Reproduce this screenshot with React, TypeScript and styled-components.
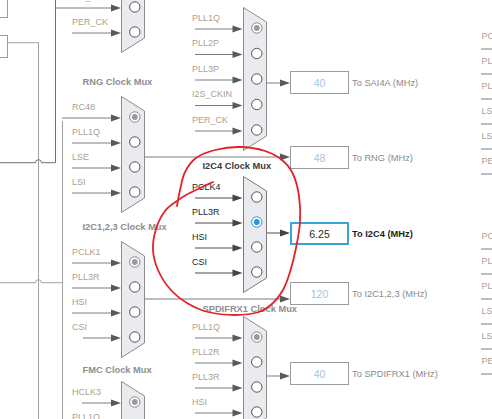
import React from 'react';
import styled, { createGlobalStyle } from 'styled-components';

const GlobalStyle = createGlobalStyle`
  html, body {
    margin: 0;
    padding: 0;
    background: #ffffff;
  }
  body {
    font-family: "Liberation Sans", Arial, sans-serif;
  }
`;

type Pt = [number, number];

interface MuxInput {
  label: string;
  from?: number;
}

interface MuxDef {
  x: number;
  labelX: number;
  wireX: number;
  first: number;
  step: number;
  inputs: MuxInput[];
  sel: number;
  active?: boolean;
  title?: string;
  titleGap?: number;
  outY?: number;
}

interface FreqDef {
  y: number;
  value: string;
  caption: string;
  active?: boolean;
}

const LEFT = 121;
const MID = 242.5;
const MUX_W = 23.5;
const BOX_X = 290;

const muxes: MuxDef[] = [
  {
    x: LEFT, labelX: 72, wireX: 72, first: -18, step: 25, sel: -1,
    inputs: [{ label: 'PLL3P' }, { label: 'I2S_CKIN', from: 55 }, { label: 'PER_CK' }],
  },
  {
    x: LEFT, labelX: 72, wireX: 72, first: 117, step: 25, sel: 0,
    title: 'RNG Clock Mux', titleGap: 8, outY: 157,
    inputs: [{ label: 'RC48', from: 62 }, { label: 'PLL1Q' }, { label: 'LSE' }, { label: 'LSI' }],
  },
  {
    x: LEFT, labelX: 72, wireX: 72, first: 262, step: 25, sel: 0,
    title: 'I2C1,2,3 Clock Mux', titleGap: 8, outY: 299,
    inputs: [{ label: 'PCLK1' }, { label: 'PLL3R' }, { label: 'HSI' }, { label: 'CSI', from: 83 }],
  },
  {
    x: LEFT, labelX: 72, wireX: 82, first: 402, step: 25, sel: 0,
    title: 'FMC Clock Mux', titleGap: 5, 
    inputs: [{ label: 'HCLK3' }, { label: 'PLL1Q' }, { label: 'PLL2R' }],
  },
  {
    x: MID, labelX: 192, wireX: 195, first: 28, step: 25.5, sel: 0, outY: 83,
    inputs: [{ label: 'PLL1Q' }, { label: 'PLL2P' }, { label: 'PLL3P' }, { label: 'I2S_CKIN' }, { label: 'PER_CK' }],
  },
  {
    x: MID, labelX: 192, wireX: 195, first: 197, step: 25, sel: 1, active: true,
    title: 'I2C4 Clock Mux', titleGap: 4, outY: 233,
    inputs: [{ label: 'PCLK4' }, { label: 'PLL3R' }, { label: 'HSI' }, { label: 'CSI' }],
  },
  {
    x: MID, labelX: 192, wireX: 195, first: 337, step: 25, sel: 0,
    title: 'SPDIFRX1 Clock Mux', titleGap: 1, outY: 376,
    inputs: [{ label: 'PLL1Q' }, { label: 'PLL2R' }, { label: 'PLL3R' }, { label: 'HSI' }],
  },
];

const freqs: FreqDef[] = [
  { y: 71, value: '40', caption: 'To SAI4A (MHz)' },
  { y: 146, value: '48', caption: 'To RNG (MHz)' },
  { y: 222, value: '6.25', caption: 'To I2C4 (MHz)', active: true },
  { y: 282, value: '120', caption: 'To I2C1,2,3 (MHz)' },
  { y: 362, value: '40', caption: 'To SPDIFRX1 (MHz)' },
];

const edgeLabels = ['PCLK1', 'PLL2Q', 'PLL3Q', 'LSE', 'LSI', 'PER_CK'];
const edgeGroups = [36, 236];

const loop: Pt[] = [
  [213, 182], [198, 189], [186, 195], [177, 201], [165, 211], [156, 229],
  [153, 250], [158, 270], [170, 289], [187, 303], [208, 312], [235, 315],
  [259, 312], [273, 303], [283, 290], [290, 272], [296, 248], [300, 222],
  [299, 196], [293, 174], [282, 160], [265, 151], [240, 147], [215, 150],
  [196, 158], [185, 172], [180, 190], [177, 206],
];

const radiosOf = (m: MuxDef) => m.inputs.map((_, i) => m.first + i * m.step);

const smooth = (pts: Pt[]) => {
  let d = `M${pts[0][0]},${pts[0][1]}`;
  for (let i = 0; i < pts.length - 1; i++) {
    const p0 = pts[i - 1] || pts[i];
    const p1 = pts[i];
    const p2 = pts[i + 1];
    const p3 = pts[i + 2] || p2;
    const c1x = p1[0] + (p2[0] - p0[0]) / 6;
    const c1y = p1[1] + (p2[1] - p0[1]) / 6;
    const c2x = p2[0] - (p3[0] - p1[0]) / 6;
    const c2y = p2[1] - (p3[1] - p1[1]) / 6;
    d += ` C${c1x},${c1y} ${c2x},${c2y} ${p2[0]},${p2[1]}`;
  }
  return d;
};

const Arrow: React.FC<{ x1: number; x2: number; y: number; dark?: boolean }> = ({ x1, x2, y, dark }) => (
  <g>
    <line x1={x1} y1={y} x2={x2 - 8} y2={y} stroke={dark ? '#4d4d4d' : '#7c7c7c'} strokeWidth={1} />
    <polygon points={`${x2 - 10},${y - 3.5} ${x2},${y} ${x2 - 10},${y + 3.5}`} fill={dark ? '#444' : '#5a5a5a'} />
  </g>
);

// the trapezoid with its radio buttons
const MuxShape: React.FC<{ mux: MuxDef }> = ({ mux }) => {
  const n = mux.inputs.length;
  const span = (n - 1) * mux.step;
  const h = span + 42;
  return (
    <svg width={MUX_W + 1} height={h} style={{ flex: 'none' }}>
      <polygon
        points={`0.5,0.5 ${MUX_W},15 ${MUX_W},${h - 15} 0.5,${h - 0.5}`}
        fill="#e9ebee"
        stroke={mux.active ? '#7a7a7a' : '#8c8c8c'}
        strokeWidth={1}
      />
      {mux.inputs.map((_, i) => {
        const cy = 21 + i * mux.step;
        const on = i === mux.sel;
        const ring = on ? (mux.active ? '#2d95d6' : '#8a8a8a') : '#555';
        return (
          <g key={i}>
            <circle cx={13.8} cy={cy} r={5.2} fill="#fff" stroke={ring} strokeWidth={1} />
            {on && <circle cx={13.8} cy={cy} r={2.9} fill={mux.active ? '#2d95d6' : '#9a9a9a'} />}
          </g>
        );
      })}
    </svg>
  );
};

const MuxBlock: React.FC<{ mux: MuxDef }> = ({ mux }) => (
  <MuxNode $x={mux.labelX} $y={mux.first - 21}>
    {mux.title && (
      <MuxTitle $gap={mux.titleGap ?? 0} $active={mux.active}>
        {mux.title}
      </MuxTitle>
    )}
    <InputColumn $w={mux.x - mux.labelX} $gap={mux.step - 11}>
      {mux.inputs.map((inp, i) => (
        <InputLabel key={i} $active={mux.active}>
          {inp.label}
        </InputLabel>
      ))}
    </InputColumn>
    <MuxShape mux={mux} />
  </MuxNode>
);

const App: React.FC = () => {
  return (
    <>
      <GlobalStyle />
      <Canvas>
        <StubColumn>
          <StubBox $h={19} />
          <StubBox $h={23} />
        </StubColumn>

        <WireLayer width={492} height={419}>
          <path d="M8,42.7 H38.5 V419" fill="none" stroke="#a0a0a0" />
          <path d="M55.5,0 V162.7 H41.5 A3,3 0 0 0 35.5,162.7 H0" fill="none" stroke="#6e6e6e" />
          <path d="M62.5,419 V121" fill="none" stroke="#a0a0a0" />
          <path d="M0,282.7 H35.5 A3,3 0 0 1 41.5,282.7 H62.5" fill="none" stroke="#a0a0a0" />

          {muxes.map((m, mi) =>
            radiosOf(m).map((r, i) => (
              <Arrow key={`${mi}-${i}`} x1={m.inputs[i].from ?? m.wireX} x2={m.x} y={r + 1} dark={m.active} />
            )),
          )}

          {muxes.map((m, mi) =>
            m.outY !== undefined ? (
              <Arrow key={`o${mi}`} x1={m.x + MUX_W} x2={BOX_X} y={m.outY} dark={m.active} />
            ) : null,
          )}

          {edgeGroups.map((g) =>
            edgeLabels.map((_, i) => (
              <line key={`${g}-${i}`} x1={481} y1={g + i * 25 + 13} x2={492} y2={g + i * 25 + 13} stroke="#7c7c7c" />
            )),
          )}
        </WireLayer>

        {muxes.map((m, mi) => (
          <MuxBlock key={mi} mux={m} />
        ))}

        {edgeGroups.map((g) => (
          <EdgeColumn key={g} $y={g - 5.5}>
            {edgeLabels.map((l) => (
              <InputLabel key={l}>{l}</InputLabel>
            ))}
          </EdgeColumn>
        ))}

        {freqs.map((f) => (
          <FreqRow key={f.caption} $y={f.y}>
            <FreqBox $active={f.active}>{f.value}</FreqBox>
            <FreqCaption $active={f.active}>{f.caption}</FreqCaption>
          </FreqRow>
        ))}

        <Annotation width={492} height={419}>
          <path d={smooth(loop)} fill="none" stroke="#e2222a" strokeWidth={1.8} strokeLinecap="round" />
        </Annotation>
      </Canvas>
    </>
  );
};

export default App;

const Canvas = styled.div`
  position: relative;
  width: 492px;
  height: 419px;
  overflow: hidden;
  background: #ffffff;
  font-family: "Liberation Sans", Arial, sans-serif;
`;

const WireLayer = styled.svg`
  position: absolute;
  left: 0;
  top: 0;
`;

const Annotation = styled.svg`
  position: absolute;
  left: 0;
  top: 0;
  pointer-events: none;
`;

const StubColumn = styled.div`
  position: absolute;
  left: -2px;
  top: -1px;
  display: flex;
  flex-direction: column;
  gap: 17px;
`;

const StubBox = styled.div<{ $h: number }>`
  width: 10px;
  height: ${(p) => p.$h}px;
  box-sizing: border-box;
  border: 1px solid #9c9c9c;
  background: #fff;
`;

const MuxNode = styled.div<{ $x: number; $y: number }>`
  position: absolute;
  left: ${(p) => p.$x}px;
  top: ${(p) => p.$y}px;
  display: flex;
  align-items: flex-start;
`;

const MuxTitle = styled.span<{ $gap: number; $active?: boolean }>`
  position: absolute;
  left: 10.5px;
  bottom: calc(100% + ${(p) => p.$gap}px);
  font-size: 9.3px;
  line-height: 12px;
  font-weight: bold;
  white-space: nowrap;
  color: ${(p) => (p.$active ? '#3a3a3a' : '#8e8e8e')};
`;

const InputColumn = styled.div<{ $w: number; $gap: number }>`
  width: ${(p) => p.$w}px;
  flex: none;
  display: flex;
  flex-direction: column;
  gap: ${(p) => p.$gap}px;
  padding-top: 5.5px;
`;

const InputLabel = styled.span<{ $active?: boolean }>`
  display: block;
  height: 11px;
  font-size: 9px;
  line-height: 11px;
  white-space: nowrap;
  color: ${(p) => (p.$active ? '#1e1e1e' : '#ab9f93')};
`;

const EdgeColumn = styled.div<{ $y: number }>`
  position: absolute;
  left: 481.5px;
  top: ${(p) => p.$y}px;
  display: flex;
  flex-direction: column;
  gap: 14px;
`;

const FreqRow = styled.div<{ $y: number }>`
  position: absolute;
  left: ${BOX_X}px;
  top: ${(p) => p.$y}px;
  display: flex;
  align-items: center;
  gap: 3px;
  height: 23px;
`;

const FreqBox = styled.div<{ $active?: boolean }>`
  width: 59px;
  height: 23px;
  box-sizing: border-box;
  display: flex;
  align-items: center;
  justify-content: center;
  background: #fff;
  border: ${(p) => (p.$active ? '2px solid #3aa3dc' : '1px solid #9c9c9c')};
  font-size: 10.5px;
  color: ${(p) => (p.$active ? '#2a2a2a' : '#a9c2da')};
`;

const FreqCaption = styled.span<{ $active?: boolean }>`
  font-size: 9.3px;
  white-space: nowrap;
  font-weight: ${(p) => (p.$active ? 'bold' : 'normal')};
  color: ${(p) => (p.$active ? '#1e1e1e' : '#8a8a8a')};
`;
